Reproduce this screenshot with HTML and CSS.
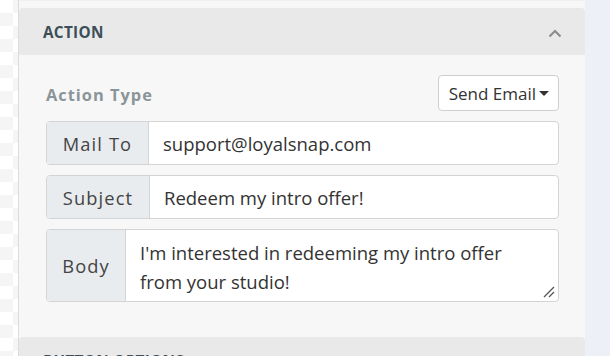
FILE: index.html
```html
<!DOCTYPE html>
<html>
<head>
<meta charset="utf-8">
<link rel="stylesheet" href="styles.css">
</head>
<body>
<div class="page">
  <div class="checker"></div>
  <div class="panel">
    <div class="topband"></div>
    <section class="section">
      <div class="sec-head">
        <span class="sec-title">ACTION</span>
        <svg class="chev" width="14" height="9" viewBox="0 0 14 9"><path d="M1.5 7.5 L7 2 L12.5 7.5" fill="none" stroke="#8c8c8c" stroke-width="2.2"/></svg>
      </div>
      <div class="sec-body">
        <div class="type-row">
          <span class="type-label">Action Type</span>
          <div class="dropdown">Send Email<span class="caret"></span></div>
        </div>
        <div class="group">
          <div class="addon w1">Mail To</div>
          <div class="field">support@loyalsnap.com</div>
        </div>
        <div class="group">
          <div class="addon w2">Subject</div>
          <div class="field">Redeem my intro offer!</div>
        </div>
        <div class="group tall">
          <div class="addon w3">Body</div>
          <div class="field area">I'm interested in redeeming my intro offer from your studio!
            <svg class="grip" width="12" height="12" viewBox="0 0 12 12"><path d="M1 11 L11 1 M6 11 L11 6" stroke="#555" stroke-width="1.3" fill="none"/></svg>
          </div>
        </div>
      </div>
    </section>
    <section class="section">
      <div class="sec-head">
        <span class="sec-title">BUTTON OPTIONS</span>
      </div>
    </section>
  </div>
  <div class="rightbar"></div>
</div>
</body>
</html>
```
FILE: styles.css
```css
html, body {
  margin: 0;
  padding: 0;
  width: 610px;
  height: 356px;
  overflow: hidden;
  font-family: "Open Sans", "Noto Sans", sans-serif;
}
.page {
  display: flex;
  width: 610px;
  height: 356px;
}
.checker {
  width: 18px;
  flex: none;
  background-color: #ffffff;
  background-image: conic-gradient(#f5f5f5 25%, #ffffff 0 50%, #f5f5f5 0 75%, #ffffff 0);
  background-size: 26px 26px;
  border-right: 1px solid #dcdcdc;
}
.panel {
  width: 566px;
  flex: none;
  background: #f7f7f7;
  display: flex;
  flex-direction: column;
}
.topband {
  height: 2px;
  background: #fbfbfb;
  border-bottom: 1px solid #f0f0f0;
  margin-bottom: 7px;
}
.rightbar {
  flex: 1;
  background: #eef0f7;
}
.sec-head {
  height: 47px;
  background: #e9e9e9;
  border-radius: 4px 4px 0 0;
  display: flex;
  align-items: center;
  justify-content: space-between;
  padding: 0 23px 0 24px;
}
.sec-title {
  font-size: 15.3px;
  font-weight: 700;
  color: #3c4e57;
  letter-spacing: 0.3px;
  margin-top: 1px;
}
.chev {
  margin-top: 3px;
}
.sec-body {
  padding: 20px 26px 35px 27px;
  display: flex;
  flex-direction: column;
  gap: 10px;
}
.type-row {
  display: flex;
  justify-content: space-between;
  align-items: center;
  height: 36px;
}
.type-label {
  font-size: 16.4px;
  font-weight: 700;
  color: #8b9599;
  letter-spacing: 1px;
  margin-top: 3px;
}
.dropdown {
  box-sizing: border-box;
  height: 36px;
  border: 1px solid #cfcfcf;
  border-radius: 4px;
  background: #fff;
  font-size: 17px;
  color: #333;
  display: flex;
  align-items: center;
  padding: 0 9px 0 10px;
  gap: 3px;
}
.caret {
  width: 0;
  height: 0;
  border-left: 5px solid transparent;
  border-right: 5px solid transparent;
  border-top: 5px solid #333;
  margin-top: 1px;
}
.group {
  display: flex;
  height: 44px;
  box-sizing: border-box;
  border: 1px solid #d4d4d4;
  border-radius: 4px;
  background: #fff;
  overflow: hidden;
}
.group.tall {
  height: 73px;
}
.addon {
  background: #e9ecef;
  border-right: 1px solid #d4d4d4;
  display: flex;
  align-items: center;
  justify-content: center;
  font-size: 18.3px;
  letter-spacing: 1.1px;
  color: #444;
  flex: none;
}
.w1 { width: 101px; }
.w2 { width: 102px; }
.w3 { width: 78px; }
.field {
  flex: 1;
  display: flex;
  align-items: center;
  padding-left: 14px;
  font-size: 18.5px;
  color: #333;
}
.field.area {
  display: block;
  position: relative;
  padding: 8px 14px 0 14px;
  line-height: 29px;
}
.grip {
  position: absolute;
  right: 3px;
  bottom: 3px;
}
```
